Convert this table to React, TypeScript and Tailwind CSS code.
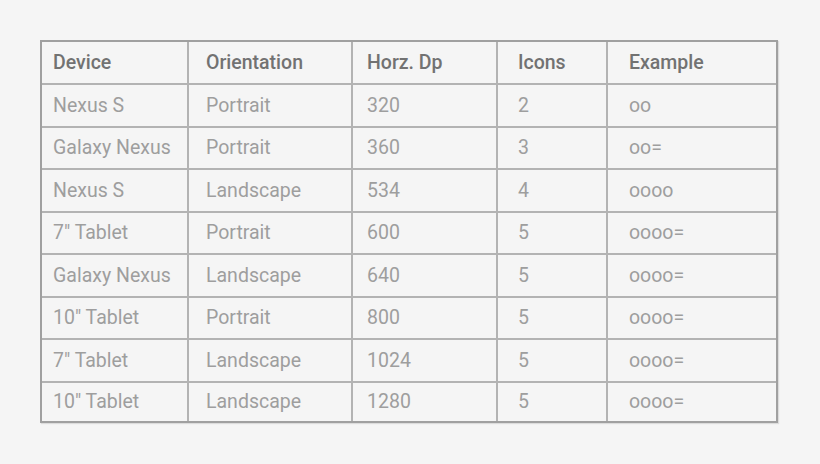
const COLS = [
  { w: "w-[147px]", pl: "pl-[11px]" },
  { w: "w-[164px]", pl: "pl-[17px]" },
  { w: "w-[145px]", pl: "pl-[14px]" },
  { w: "w-[110px]", pl: "pl-[20px]" },
  { w: "w-[168px]", pl: "pl-[21px]" },
];

const HEAD = ["Device", "Orientation", "Horz. Dp", "Icons", "Example"];

// row heights measured off the reference, bottom rule included
const HEIGHTS = ["h-[43px]", "h-[43px]", "h-[42px]", "h-[43px]", "h-[42px]", "h-[43px]", "h-[42px]", "h-[43px]", "h-[38px]"];

const ROWS: string[][] = [
  ["Nexus S", "Portrait", "320", "2", "oo"],
  ["Galaxy Nexus", "Portrait", "360", "3", "oo="],
  ["Nexus S", "Landscape", "534", "4", "oooo"],
  ['7" Tablet', "Portrait", "600", "5", "oooo="],
  ["Galaxy Nexus", "Landscape", "640", "5", "oooo="],
  ['10" Tablet', "Portrait", "800", "5", "oooo="],
  ['7" Tablet', "Landscape", "1024", "5", "oooo="],
  ['10" Tablet', "Landscape", "1280", "5", "oooo="],
];

function Row({ cells, h, head, last }: { cells: string[]; h: string; head?: boolean; last?: boolean }) {
  return (
    <div className={`flex ${h} ${last ? "" : "border-b-2 border-[#b3b3b3]"}`}>
      {cells.map((c, i) => (
        <div
          key={i}
          className={`${COLS[i].w} ${COLS[i].pl} flex items-center ${
            i < cells.length - 1 ? "border-r-2 border-[#b3b3b3]" : ""
          } ${head ? "font-medium text-[#727272]" : "text-[#9e9e9e]"}`}
        >
          {c}
        </div>
      ))}
    </div>
  );
}

export default function App() {
  return (
    <div
      className="w-[820px] h-[464px] bg-[#f5f5f5] pt-[40px] pl-[40px] text-[19.5px]"
      style={{ fontFamily: "Roboto, 'Liberation Sans', sans-serif" }}
    >
      <div className="w-[738px] border-2 border-[#a0a0a0] shadow-[1px_1px_1px_rgba(0,0,0,0.1)]">
        <Row cells={HEAD} h={HEIGHTS[0]} head />
        {ROWS.map((r, i) => (
          <Row key={i} cells={r} h={HEIGHTS[i + 1]} last={i === ROWS.length - 1} />
        ))}
      </div>
    </div>
  );
}
